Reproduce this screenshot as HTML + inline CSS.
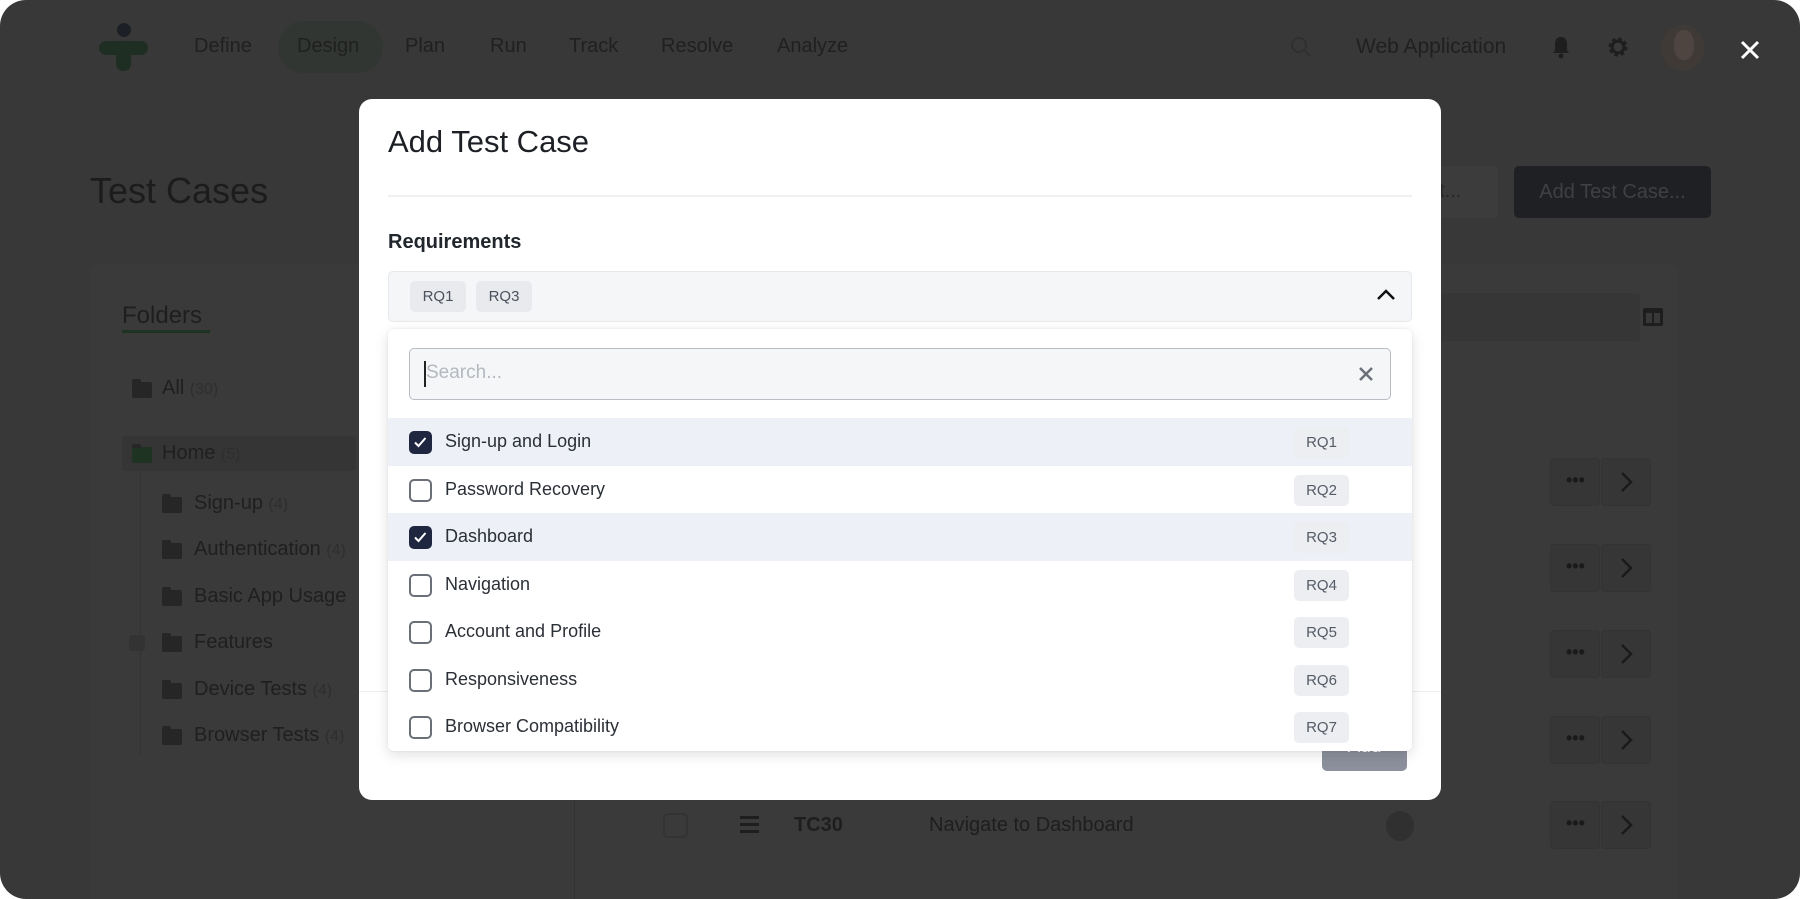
<!DOCTYPE html>
<html><head><meta charset="utf-8"><style>
*{box-sizing:border-box;margin:0;padding:0}
html,body{width:1800px;height:899px;overflow:hidden}
body{background:#fff;font-family:"Liberation Sans",sans-serif;position:relative}
.frame{position:absolute;left:0;top:0;width:1800px;height:899px;background:#383838;border-radius:26px;overflow:hidden}
.a{position:absolute;white-space:nowrap}
.nav{font-size:20px;color:#202020;top:35px}
.pill{left:278px;top:21px;width:105px;height:52px;border-radius:26px;background:#323632}
.fold{font-size:20px;color:#1f1f1f}
.fold small{font-size:16px;color:#2e2e2e}
.fi{width:20px;height:16px;background:#262626;border-radius:2px;position:absolute}
.fi:before{content:"";position:absolute;left:0;top:-3px;width:9px;height:4px;background:#262626;border-radius:2px 2px 0 0}
.ibtn{width:50px;height:48px;border:1px solid #333;border-radius:4px;background:#363636}
.modal{left:359px;top:99px;width:1082px;height:701px;background:#fff;border-radius:13px}
.row{position:absolute;left:388px;width:1024px;height:48px}
.row.sel{background:#edf0f7}
.cb{position:absolute;left:21px;top:13px;width:23px;height:23px;border:2.5px solid #6b6f78;border-radius:5px;background:#fff}
.sel .cb{background:#1f2640;border-color:#1f2640}
.row .t{position:absolute;left:57px;top:13px;font-size:18px;color:#2b2f36}
.badge{position:absolute;left:906px;top:9px;width:55px;height:31px;background:#eceef1;border-radius:5px;font-size:15px;color:#555b66;text-align:center;line-height:31px}
</style></head><body>
<div class="frame">
<div class="a" style="left:117px;top:23px;width:14px;height:14px;border-radius:50%;background:#1c1f26"></div>
<div class="a" style="left:99px;top:41px;width:49px;height:14px;border-radius:7px;background:#1f2e22"></div>
<div class="a" style="left:116px;top:41px;width:15px;height:30px;border-radius:7px;background:#1f2e22"></div>
<div class="a pill"></div>
<div class="a nav" style="left:194px">Define</div>
<div class="a nav" style="left:297px">Design</div>
<div class="a nav" style="left:405px">Plan</div>
<div class="a nav" style="left:490px">Run</div>
<div class="a nav" style="left:569px">Track</div>
<div class="a nav" style="left:661px">Resolve</div>
<div class="a nav" style="left:777px">Analyze</div>
<svg class="a" style="left:1290px;top:36px" width="22" height="22"><circle cx="9" cy="9" r="7" fill="none" stroke="#303030" stroke-width="2"/><path d="M14 14l6 6" stroke="#303030" stroke-width="2"/></svg>
<div class="a nav" style="left:1356px;font-size:21px">Web Application</div>
<svg class="a" style="left:1550px;top:35px" width="22" height="24"><path d="M11 2c-4 0-6 3-6 7v6l-2 3h16l-2-3V9c0-4-2-7-6-7z" fill="#1e1e1e"/><circle cx="11" cy="21" r="2.5" fill="#1e1e1e"/></svg>
<svg class="a" style="left:1607px;top:36px" width="22" height="22"><circle cx="11" cy="11" r="7" fill="none" stroke="#1e1e1e" stroke-width="5" stroke-dasharray="3 2.5"/><circle cx="11" cy="11" r="6" fill="none" stroke="#1e1e1e" stroke-width="3"/></svg>
<div class="a" style="left:1661px;top:25px;width:44px;height:46px;border-radius:50%;background:#3f3a36"></div>
<div class="a" style="left:1674px;top:30px;width:20px;height:30px;border-radius:45%;background:#4e4540"></div>
<svg class="a" style="left:1740px;top:40px" width="20" height="20"><path d="M2 2l16 16M18 2L2 18" stroke="#fff" stroke-width="3"/></svg>

<div class="a" style="left:90px;top:170px;font-size:36px;color:#1c1c1c">Test Cases</div>
<div class="a" style="left:1400px;top:166px;width:98px;height:52px;background:#3c3c3c;border-radius:5px"></div>
<div class="a" style="left:1418px;top:180px;font-size:20px;color:#262626">ect...</div>
<div class="a" style="left:1514px;top:166px;width:197px;height:52px;background:#1f2023;border-radius:5px;color:#3f4043;font-size:20px;text-align:center;line-height:52px">Add Test Case...</div>

<div class="a" style="left:90px;top:264px;width:1588px;height:635px;background:#3a3a3a;border-radius:10px 10px 0 0"></div>
<div class="a" style="left:574px;top:264px;width:1px;height:635px;background:#333"></div>
<div class="a" style="left:122px;top:302px;font-size:24px;color:#1e1e1e">Folders</div>
<div class="a" style="left:122px;top:330px;width:88px;height:3px;background:#1f3323"></div>
<div class="a" style="left:122px;top:436px;width:234px;height:35px;background:#353535;border-radius:4px"></div>
<div class="fi" style="left:132px;top:382px"></div><div class="a fold" style="left:162px;top:377px">All <small>(30)</small></div>
<div class="fi" style="left:132px;top:447px;background:#1f3323"></div><div class="a fold" style="left:162px;top:442px">Home <small>(5)</small></div>
<div class="a" style="left:140px;top:470px;width:1px;height:285px;background:#333"></div>
<div class="fi" style="left:162px;top:497px"></div><div class="a fold" style="left:194px;top:492px">Sign-up <small>(4)</small></div>
<div class="fi" style="left:162px;top:543px"></div><div class="a fold" style="left:194px;top:538px">Authentication <small>(4)</small></div>
<div class="fi" style="left:162px;top:590px"></div><div class="a fold" style="left:194px;top:585px">Basic App Usage</div>
<div class="a" style="left:129px;top:635px;width:16px;height:16px;background:#333;border-radius:3px"></div>
<div class="fi" style="left:162px;top:636px"></div><div class="a fold" style="left:194px;top:631px">Features</div>
<div class="fi" style="left:162px;top:683px"></div><div class="a fold" style="left:194px;top:678px">Device Tests <small>(4)</small></div>
<div class="fi" style="left:162px;top:729px"></div><div class="a fold" style="left:194px;top:724px">Browser Tests <small>(4)</small></div>

<div class="a" style="left:1420px;top:293px;width:220px;height:48px;background:#363636;border-radius:4px"></div>
<svg class="a" style="left:1642px;top:307px" width="22" height="20"><rect x="1" y="1" width="20" height="18" rx="2" fill="#1e1e1e"/><rect x="4" y="6" width="6" height="10" fill="#383838"/><rect x="12" y="6" width="6" height="10" fill="#383838"/></svg>
<div class="a ibtn" style="left:1550px;top:458px"></div><div class="a ibtn" style="left:1601px;top:458px"></div>
<div class="a ibtn" style="left:1550px;top:544px"></div><div class="a ibtn" style="left:1601px;top:544px"></div>
<div class="a ibtn" style="left:1550px;top:630px"></div><div class="a ibtn" style="left:1601px;top:630px"></div>
<div class="a ibtn" style="left:1550px;top:716px"></div><div class="a ibtn" style="left:1601px;top:716px"></div>
<div class="a ibtn" style="left:1550px;top:801px"></div><div class="a ibtn" style="left:1601px;top:801px"></div>
<div class="a" style="left:1566px;top:470px;font-size:18px;color:#1a1a1a;font-weight:bold">•••</div>
<div class="a" style="left:1566px;top:556px;font-size:18px;color:#1a1a1a;font-weight:bold">•••</div>
<div class="a" style="left:1566px;top:642px;font-size:18px;color:#1a1a1a;font-weight:bold">•••</div>
<div class="a" style="left:1566px;top:728px;font-size:18px;color:#1a1a1a;font-weight:bold">•••</div>
<div class="a" style="left:1566px;top:813px;font-size:18px;color:#1a1a1a;font-weight:bold">•••</div>
<svg class="a" style="left:1618px;top:470px" width="16" height="24"><path d="M4 3l9 9-9 9" fill="none" stroke="#1a1a1a" stroke-width="2.5"/></svg>
<svg class="a" style="left:1618px;top:556px" width="16" height="24"><path d="M4 3l9 9-9 9" fill="none" stroke="#1a1a1a" stroke-width="2.5"/></svg>
<svg class="a" style="left:1618px;top:642px" width="16" height="24"><path d="M4 3l9 9-9 9" fill="none" stroke="#1a1a1a" stroke-width="2.5"/></svg>
<svg class="a" style="left:1618px;top:728px" width="16" height="24"><path d="M4 3l9 9-9 9" fill="none" stroke="#1a1a1a" stroke-width="2.5"/></svg>
<svg class="a" style="left:1618px;top:813px" width="16" height="24"><path d="M4 3l9 9-9 9" fill="none" stroke="#1a1a1a" stroke-width="2.5"/></svg>
<div class="a" style="left:663px;top:813px;width:25px;height:25px;border:2px solid #333;border-radius:5px"></div>
<div class="a" style="left:740px;top:816px;width:19px;height:3px;background:#1e1e1e;box-shadow:0 7px 0 #1e1e1e,0 14px 0 #1e1e1e"></div>
<div class="a" style="left:794px;top:814px;font-size:20px;font-weight:bold;color:#1e1e1e">TC30</div>
<div class="a" style="left:929px;top:814px;font-size:20px;color:#1e1e1e">Navigate to Dashboard</div>
<div class="a" style="left:1386px;top:811px;width:28px;height:30px;border-radius:50%;background:#303030"></div>

<div class="a modal"></div>
<div class="a" style="left:388px;top:124px;font-size:31px;color:#1c1f24">Add Test Case</div>
<div class="a" style="left:388px;top:195px;width:1024px;height:2px;background:#f0f1f3"></div>
<div class="a" style="left:388px;top:231px;font-size:20px;font-weight:bold;color:#22262d">Requirements</div>
<div class="a" style="left:388px;top:271px;width:1024px;height:51px;background:#f5f6f8;border:1px solid #e6e8eb;border-radius:5px"></div>
<div class="a" style="left:410px;top:281px;width:56px;height:31px;background:#e8eaed;border-radius:5px;font-size:15px;color:#4b515c;text-align:center;line-height:31px">RQ1</div>
<div class="a" style="left:476px;top:281px;width:56px;height:31px;background:#e8eaed;border-radius:5px;font-size:15px;color:#4b515c;text-align:center;line-height:31px">RQ3</div>
<svg class="a" style="left:1376px;top:287px" width="20" height="16"><path d="M2 12l8-8 8 8" fill="none" stroke="#111" stroke-width="2.5"/></svg>
<div class="a" style="left:359px;top:691px;width:1082px;height:1px;background:#eceef0"></div>
<div class="a" style="left:1228px;top:733px;font-size:19px;font-weight:bold;color:#22262d">Cancel</div>
<div class="a" style="left:1322px;top:723px;width:85px;height:48px;background:#8b909c;border-radius:5px;color:#fff;font-size:19px;text-align:center;line-height:48px">Add</div>
<div class="a" style="left:388px;top:329px;width:1024px;height:422px;background:#fff;border-radius:6px;box-shadow:0 4px 14px rgba(0,0,0,.12),0 0 2px rgba(0,0,0,.08)"></div>
<div class="a" style="left:409px;top:348px;width:982px;height:52px;background:#f5f6f8;border:1.5px solid #b8bcc3;border-radius:5px"></div>
<div class="a" style="left:424px;top:361px;width:1.5px;height:26px;background:#222"></div>
<div class="a" style="left:426px;top:362px;font-size:19px;color:#b4b8bf">Search...</div>
<svg class="a" style="left:1358px;top:366px" width="16" height="16"><path d="M2 2l12 12M14 2L2 14" stroke="#6b7079" stroke-width="2.5"/></svg>

<div class="row sel" style="top:418px"><div class="cb"><svg width="18" height="18" style="position:absolute;left:0;top:0"><path d="M4 9.5l3.5 3.5 7-8" fill="none" stroke="#fff" stroke-width="2"/></svg></div><div class="t">Sign-up and Login</div><div class="badge">RQ1</div></div>
<div class="row" style="top:466px"><div class="cb"></div><div class="t">Password Recovery</div><div class="badge">RQ2</div></div>
<div class="row sel" style="top:513px"><div class="cb"><svg width="18" height="18" style="position:absolute;left:0;top:0"><path d="M4 9.5l3.5 3.5 7-8" fill="none" stroke="#fff" stroke-width="2"/></svg></div><div class="t">Dashboard</div><div class="badge">RQ3</div></div>
<div class="row" style="top:561px"><div class="cb"></div><div class="t">Navigation</div><div class="badge">RQ4</div></div>
<div class="row" style="top:608px"><div class="cb"></div><div class="t">Account and Profile</div><div class="badge">RQ5</div></div>
<div class="row" style="top:656px"><div class="cb"></div><div class="t">Responsiveness</div><div class="badge">RQ6</div></div>
<div class="row" style="top:703px"><div class="cb"></div><div class="t">Browser Compatibility</div><div class="badge">RQ7</div></div>
</div>
</body></html>
